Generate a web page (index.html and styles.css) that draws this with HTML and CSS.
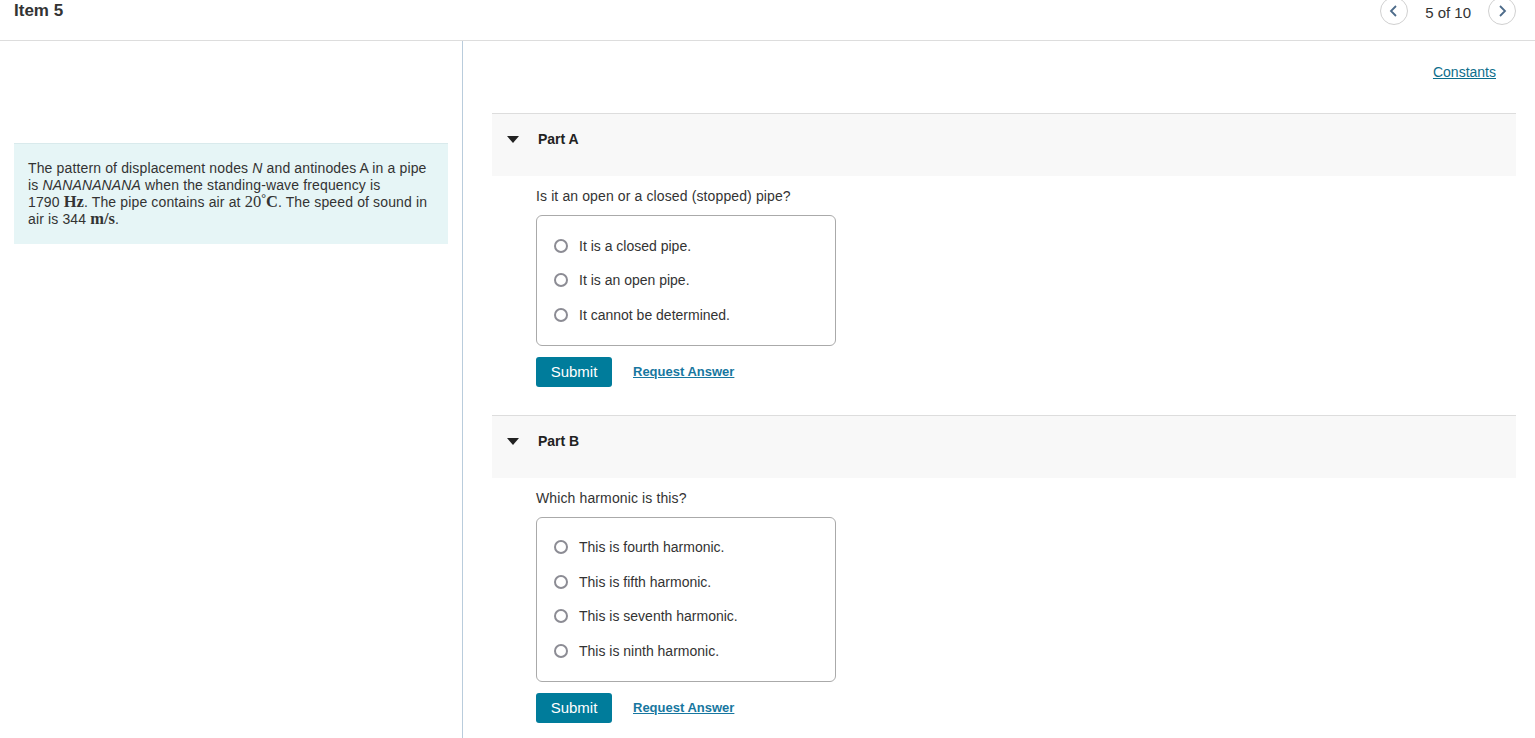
FILE: index.html
```html
<!DOCTYPE html>
<html>
<head>
<meta charset="utf-8">
<link rel="stylesheet" href="styles.css">
</head>
<body>
<header class="topbar">
  <div class="item-title">Item 5</div>
  <nav class="pager">
    <span class="nav-btn"><svg width="12" height="14" viewBox="0 0 12 14"><polyline points="8,2 3,7 8,12" fill="none" stroke="#4d6b8a" stroke-width="1.8"/></svg></span>
    <span class="pager-text">5 of 10</span>
    <span class="nav-btn"><svg width="12" height="14" viewBox="0 0 12 14"><polyline points="4,2 9,7 4,12" fill="none" stroke="#4d6b8a" stroke-width="1.8"/></svg></span>
  </nav>
</header>
<main class="layout">
  <section class="left">
    <div class="intro">The pattern of displacement nodes <i>N</i> and antinodes A in a pipe<br>is <i>NANANANANA</i> when the standing-wave frequency is<br>1790 <span class="math b">Hz</span>. The pipe contains air at <span class="math">20<span class="deg">°</span><b>C</b></span>. The speed of sound in<br>air is 344 <span class="math b">m/s</span>.</div>
  </section>
  <section class="right">
    <div class="constants-row"><a class="constants" href="#">Constants</a></div>

    <div class="part">
      <div class="part-head"><span class="tri"></span><span class="part-title">Part A</span></div>
      <div class="part-body">
        <p class="question">Is it an open or a closed (stopped) pipe?</p>
        <div class="choices">
          <label class="choice"><span class="radio"></span>It is a closed pipe.</label>
          <label class="choice"><span class="radio"></span>It is an open pipe.</label>
          <label class="choice"><span class="radio"></span>It cannot be determined.</label>
        </div>
        <div class="actions"><button class="submit">Submit</button><a class="req" href="#">Request Answer</a></div>
      </div>
    </div>

    <div class="part">
      <div class="part-head"><span class="tri"></span><span class="part-title">Part B</span></div>
      <div class="part-body">
        <p class="question">Which harmonic is this?</p>
        <div class="choices">
          <label class="choice"><span class="radio"></span>This is fourth harmonic.</label>
          <label class="choice"><span class="radio"></span>This is fifth harmonic.</label>
          <label class="choice"><span class="radio"></span>This is seventh harmonic.</label>
          <label class="choice"><span class="radio"></span>This is ninth harmonic.</label>
        </div>
        <div class="actions"><button class="submit">Submit</button><a class="req" href="#">Request Answer</a></div>
      </div>
    </div>
  </section>
</main>
</body>
</html>
```
FILE: styles.css
```css
html, body { margin: 0; padding: 0; }
body {
  font-family: "Liberation Sans", Arial, sans-serif;
  color: #333;
  background: #fff;
  height: 738px;
  overflow: hidden;
}
.topbar {
  height: 40px;
  border-bottom: 1px solid #ddd;
  display: flex;
  justify-content: space-between;
  align-items: flex-start;
  padding: 0 19px 0 14px;
}
.item-title {
  font-weight: bold;
  font-size: 17px;
  line-height: 18px;
  padding-top: 2px;
  color: #333;
}
.pager {
  display: flex;
  align-items: center;
  height: 24px;
}
.nav-btn {
  width: 28px;
  height: 28px;
  border: 1px solid #d0d0d0;
  border-radius: 50%;
  display: flex;
  align-items: center;
  justify-content: center;
  box-sizing: border-box;
  margin-top: -2px;
}
.pager-text {
  font-size: 15px;
  color: #333;
  margin: 0 17px;
}
.layout {
  display: flex;
  height: 697px;
}
.left {
  width: 463px;
  border-right: 1px solid #b9ccdc;
  box-sizing: border-box;
  flex: none;
  padding: 102px 14px 0 14px;
}
.intro {
  background: #e6f5f6;
  border-top: 1px solid #d9eaec;
  padding: 16px 10px 16px 14px;
  font-size: 14px;
  line-height: 17px;
  letter-spacing: 0.14px;
  color: #333;
  white-space: nowrap;
}
.math { font-family: "Liberation Serif", "Times New Roman", serif; font-size: 16.5px; line-height: 0; letter-spacing: 0; }
.math.b { font-weight: bold; }
.deg { font-size: 12px; vertical-align: 5px; font-weight: bold; }
.right {
  flex: 1;
  padding: 0 19px 0 29px;
}
.constants-row {
  display: flex;
  justify-content: flex-end;
  padding: 23px 20px 0 0;
  height: 49px;
  line-height: 17px;
}
.constants {
  font-size: 14px;
  color: #0d6e8c;
  text-decoration: underline;
}
.part-head {
  height: 62px;
  border-top: 1px solid #ddd;
  background: #f8f8f8;
  display: flex;
  align-items: flex-start;
}
.tri {
  width: 0; height: 0;
  border-left: 6px solid transparent;
  border-right: 6px solid transparent;
  border-top: 7px solid #222;
  margin: 22px 0 0 15px;
}
.part-title {
  font-weight: bold;
  font-size: 14px;
  line-height: 17px;
  color: #222;
  margin: 17px 0 0 19px;
}
.part-body {
  padding: 12px 0 28px 44px;
}
.question {
  margin: 0 0 10px 0;
  font-size: 14px;
  line-height: 17px;
  letter-spacing: 0.12px;
  color: #333;
}
.choices {
  width: 300px;
  box-sizing: border-box;
  border: 1px solid #aaa;
  border-radius: 6px;
  padding: 12.5px 17px;
}
.choice {
  display: flex;
  align-items: center;
  height: 34.5px;
  font-size: 14px;
  color: #333;
}
.radio {
  width: 14px;
  height: 14px;
  box-sizing: border-box;
  border: 2px solid #8c8c94;
  border-radius: 50%;
  margin-right: 11px;
  flex: none;
}
.actions {
  display: flex;
  align-items: center;
  margin-top: 11px;
}
.submit {
  width: 76px;
  height: 30px;
  background: #007c9b;
  color: #fff;
  border: none;
  border-radius: 3px;
  font-family: "Liberation Sans", Arial, sans-serif;
  font-size: 15px;
  padding: 0;
}
.req {
  margin-left: 21px;
  font-weight: bold;
  font-size: 13px;
  color: #1777a0;
  text-decoration: underline;
}
```
